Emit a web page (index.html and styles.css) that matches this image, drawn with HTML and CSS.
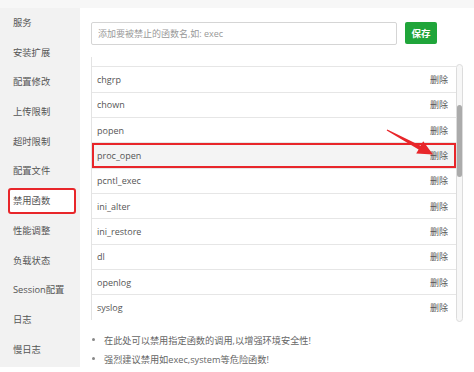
FILE: index.html
```html
<!DOCTYPE html>
<html>
<head>
<title>禁用函数</title>
<meta charset="UTF-8">
<meta name="viewport" content="width=device-width, initial-scale=1.0">
<link rel="stylesheet" href="styles.css">
</head>
<body>
<div class="topbar"></div>
<div class="main">
<div class="sidebar">
<div class="nav-item">服务</div>
<div class="nav-item">安装扩展</div>
<div class="nav-item">配置修改</div>
<div class="nav-item">上传限制</div>
<div class="nav-item">超时限制</div>
<div class="nav-item">配置文件</div>
<div class="nav-item active"><span>禁用函数</span></div>
<div class="nav-item">性能调整</div>
<div class="nav-item">负载状态</div>
<div class="nav-item">Session配置</div>
<div class="nav-item">日志</div>
<div class="nav-item">慢日志</div>
</div>
<div class="content">
<div class="add-row">
<input type="text" class="fn-input" placeholder="添加要被禁止的函数名,如: exec">
<button class="btn-save">保存</button>
</div>
<div class="list-wrap">
<div class="list">
<div class="row-cut"></div>
<div class="row"><span>chgrp</span><a class="del">删除</a></div>
<div class="row"><span>chown</span><a class="del">删除</a></div>
<div class="row"><span>popen</span><a class="del">删除</a></div>
<div class="row marked"><span>proc_open</span><a class="del">删除</a></div>
<div class="row"><span>pcntl_exec</span><a class="del">删除</a></div>
<div class="row"><span>ini_alter</span><a class="del">删除</a></div>
<div class="row"><span>ini_restore</span><a class="del">删除</a></div>
<div class="row"><span>dl</span><a class="del">删除</a></div>
<div class="row"><span>openlog</span><a class="del">删除</a></div>
<div class="row"><span>syslog</span><a class="del">删除</a></div>
</div>
<div class="scrollbar"><div class="thumb"></div></div>
</div>
<ul class="notes">
<li>在此处可以禁用指定函数的调用,以增强环境安全性!</li>
<li>强烈建议禁用如exec,system等危险函数!</li>
</ul>
</div>
</div>
<svg class="arrow" width="474" height="372" viewBox="0 0 474 372">
<polygon points="386.7,130.6 418.6,149.6 416.2,153.6 433,154.5 423.2,141.3 420.6,145.8 387.3,129.4" fill="#e8262a"/>
</svg>
</body>
</html>
```

FILE: styles.css
```css
body {
    margin: 0;
    background: #fff;
    font-family: "Open Sans", "Noto Sans CJK SC", sans-serif;
    font-size: 9px;
    color: #555;
    position: relative;
    width: 474px;
    height: 372px;
    overflow: hidden;
}
.topbar {
    height: 8px;
    background: #f7f7f7;
}
.main {
    display: flex;
}
.sidebar {
    width: 80px;
    height: 359px;
    background: #f2f2f2;
}
.nav-item {
    height: 29.7px;
    line-height: 29.7px;
    padding-left: 13px;
    font-size: 9.3px;
    color: #555;
    box-sizing: border-box;
}
.nav-item.active {
    padding: 2px 4px 2px 8px;
    line-height: normal;
}
.nav-item.active span {
    display: block;
    height: 100%;
    box-sizing: border-box;
    border: 2px solid #e8262a;
    border-radius: 3px;
    background: #fff;
    padding-left: 3px;
    line-height: 21px;
}
.content {
    flex: 1;
    padding: 14px 0 0 11px;
}
.add-row {
    display: flex;
    gap: 8px;
    align-items: flex-start;
}
.fn-input {
    width: 306px;
    height: 23px;
    box-sizing: border-box;
    border: 1px solid #d5d5d5;
    border-radius: 2px;
    padding: 0 6px;
    font-family: inherit;
    font-size: 9px;
    outline: none;
}
.fn-input::placeholder {
    color: #999;
}
.btn-save {
    width: 32px;
    height: 22px;
    border: none;
    border-radius: 2px;
    background: #20a53a;
    color: #fff;
    font-family: inherit;
    font-size: 9.5px;
    font-weight: bold;
    padding: 0;
}
.list-wrap {
    display: flex;
    margin-top: 12px;
}
.list {
    width: 365px;
    height: 263px;
    box-sizing: border-box;
    border-left: 1px solid #e3e3e3;
    overflow: hidden;
}
.row-cut {
    height: 9.3px;
    border-bottom: 1px solid #e6e6e6;
}
.row {
    height: 25.33px;
    box-sizing: border-box;
    display: flex;
    align-items: center;
    justify-content: space-between;
    padding: 0 8px 0 5px;
    border-bottom: 1px solid #e6e6e6;
    font-size: 9px;
    color: #555;
}
.row.marked {
    background: #f4f4f4;
    box-shadow: inset 0 0 0 2px #e8262a;
}
.del {
    color: #555;
    font-size: 9px;
}
.scrollbar {
    width: 7px;
    height: 258px;
    margin-top: 7px;
    box-sizing: border-box;
    border: 1px solid #dcdcdc;
    border-radius: 4px;
    background: #f7f7f7;
}
.thumb {
    margin-top: 40px;
    height: 72px;
    background: #ababab;
    border-radius: 3px;
}
.notes {
    list-style: none;
    margin: 0;
    padding: 8px 0 0 0;
}
.notes li {
    display: flex;
    align-items: center;
    height: 19px;
    color: #666;
    font-size: 9.2px;
}
.notes li::before {
    content: "";
    width: 3px;
    height: 3px;
    border-radius: 50%;
    background: #888;
    margin: 0 9px 0 1px;
}
.arrow {
    position: absolute;
    left: 0;
    top: 0;
    pointer-events: none;
}
```
